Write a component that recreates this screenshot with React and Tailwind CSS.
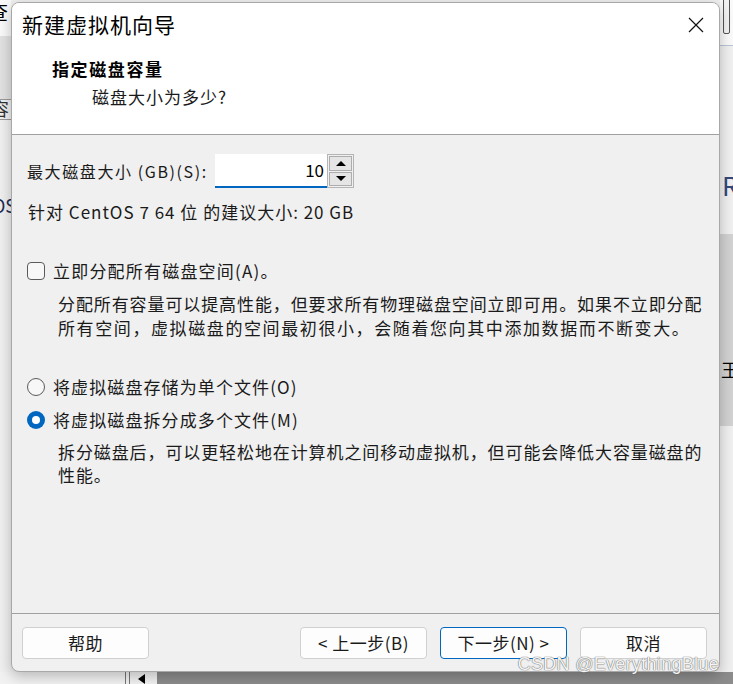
import React, { useState } from 'react';

const font = { fontFamily: '"Noto Sans CJK SC", "Liberation Sans", sans-serif' };

function Backdrop() {
    return (
        <div className="absolute inset-0 bg-[#f0f0f0]">
            {/* left strip */}
            <div className="absolute left-0 top-0 w-[11px] h-[36px] bg-[#fafafa] overflow-hidden">
                <span className="absolute left-[-12px] top-[2px] text-[20px] text-black leading-none" style={font}>查</span>
            </div>
            <div className="absolute left-0 top-[36px] w-[11px] h-[64px] bg-[#e2e2e2] border-b border-[#9a9a9a]" />
            <div className="absolute left-0 top-[100px] w-[11px] h-[20px] overflow-hidden border-b border-[#9a9a9a]">
                <span className="absolute left-[-9px] top-[-1px] text-[18px] text-[#333] leading-none" style={font}>容</span>
            </div>
            <div className="absolute left-0 top-[196px] w-[11px] h-[22px] overflow-hidden">
                <span className="absolute left-[-8px] top-0 text-[18px] text-[#1d2b55] leading-none" style={font}>OS</span>
            </div>
            {/* right strip */}
            <div className="absolute right-0 top-0 w-[13px] h-[46px] bg-[#fafafa] border-b border-[#b9c4d6]">
                <div className="absolute left-[3px] top-[-2px] w-[7px] h-[36px] border border-[#555] rounded-[2px] bg-[#f3f3f3]" />
            </div>
            <div className="absolute right-0 top-[172px] w-[13px] h-[30px] overflow-hidden">
                <span className="absolute left-[2px] top-0 text-[26px] text-[#34487a] leading-none" style={font}>R</span>
            </div>
            <div className="absolute right-0 top-[234px] w-[13px] h-[192px] bg-[#d2d2d2]">
                <span className="absolute left-[1px] top-[126px] text-[18px] text-black leading-none" style={font}>王</span>
            </div>
            {/* bottom strip */}
            <div className="absolute left-0 bottom-0 w-full h-[12px] flex">
                <div className="relative w-[157px] h-full bg-[#f2f2f2]">
                    <div className="absolute left-[125px] top-0 w-px h-full bg-[#777]" />
                    <div className="absolute left-[129px] top-0 w-px h-full bg-[#777]" />
                    <div className="absolute left-[138px] top-[2px] w-0 h-0 border-y-[5px] border-y-transparent border-r-[7px] border-r-black" />
                </div>
                <div className="flex-1 h-full bg-[#8c8c8c]" />
            </div>
        </div>
    );
}

function Radio({ checked }) {
    if (checked) {
        return (
            <span className="w-[18px] h-[18px] rounded-full bg-[#0067c0] flex items-center justify-center shrink-0">
                <span className="w-[8px] h-[8px] rounded-full bg-white" />
            </span>
        );
    }
    return <span className="w-[18px] h-[18px] rounded-full border border-[#5a5a5a] bg-[#f7f7f7] shrink-0" />;
}

function WizardButton({ children, primary }) {
    return (
        <button
            className={
                'w-[127px] h-[32px] rounded-[4px] bg-[#fdfdfd] text-[17px] tracking-[0.5px] text-[#1a1a1a] flex items-center justify-center ' +
                (primary ? 'border border-[#0067c0]' : 'border border-[#d0d0d0]')
            }
            style={font}
        >
            {children}
        </button>
    );
}

export default function App() {
    const [size, setSize] = useState(10);
    const [split, setSplit] = useState(true);
    const [allocate, setAllocate] = useState(false);

    return (
        <div className="relative w-[733px] h-[684px] overflow-hidden" style={font}>
            <Backdrop />

            {/* wizard window */}
            <div className="absolute left-[11px] top-[2px] w-[709px] h-[670px] flex flex-col rounded-[8px] border border-[#a8a8a8] overflow-hidden shadow-[0_4px_14px_rgba(0,0,0,0.25)] bg-[#f0f0f0]">
                {/* title bar */}
                <div className="h-[44px] bg-white flex items-center justify-between pl-[10px] pr-[15px] shrink-0">
                    <span className="text-[21px] tracking-[1px] text-black">新建虚拟机向导</span>
                    <svg width="16" height="16" viewBox="0 0 16 16">
                        <path d="M1 1 L15 15 M15 1 L1 15" stroke="#111" strokeWidth="1.2" />
                    </svg>
                </div>

                {/* header */}
                <div className="h-[87px] bg-white shrink-0 pt-[10px]">
                    <div className="pl-[40px] text-[17px] tracking-[1.6px] leading-[24px] font-bold text-black">指定磁盘容量</div>
                    <div className="pl-[80px] mt-[4px] text-[17px] tracking-[1px] leading-[24px] text-[#1a1a1a]">磁盘大小为多少?</div>
                </div>
                <div className="h-px bg-[#a0a0a0] shrink-0" />

                {/* content */}
                <div className="flex-1 pl-[15px] text-[#1a1a1a]">
                    <div className="mt-[19px] flex items-center h-[34px]">
                        <span className="w-[188px] text-[16px] tracking-[1.6px]">最大磁盘大小 (GB)(S):</span>
                        <div className="w-[112px] h-[34px] bg-white border-b-2 border-[#0067c0] flex items-center justify-end pr-[3px] text-[17px] text-black">
                            {size}
                        </div>
                        <div className="w-[27px] h-[34px] border border-[#b5b5b5] bg-[#f0f0f0] flex flex-col p-px gap-px">
                            <button onClick={() => setSize(size + 1)} className="flex-1 bg-[#e5e5e5] border border-[#adadad] flex items-center justify-center">
                                <span className="w-0 h-0 border-x-[5px] border-x-transparent border-b-[5px] border-b-black" />
                            </button>
                            <button onClick={() => setSize(Math.max(1, size - 1))} className="flex-1 bg-[#e5e5e5] border border-[#adadad] flex items-center justify-center">
                                <span className="w-0 h-0 border-x-[5px] border-x-transparent border-t-[5px] border-t-black" />
                            </button>
                        </div>
                    </div>

                    <div className="mt-[12px] leading-[24px] text-[17px] tracking-[1px] pl-px">针对 CentOS 7 64 位 的建议大小: 20 GB</div>

                    <div className="mt-[35px] h-[24px] flex items-center gap-[8px]" onClick={() => setAllocate(!allocate)}>
                        <span className="w-[18px] h-[18px] rounded-[4px] border border-[#5a5a5a] bg-[#f7f7f7] shrink-0" />
                        <span className="text-[17px] tracking-[1.2px]">立即分配所有磁盘空间(A)。</span>
                    </div>
                    <div className="mt-[9px] ml-[31px] text-[17px] leading-[24px] whitespace-nowrap">
                        <div className="tracking-[0.9px]">分配所有容量可以提高性能，但要求所有物理磁盘空间立即可用。如果不立即分配</div>
                        <div className="tracking-[1.6px]">所有空间，虚拟磁盘的空间最初很小，会随着您向其中添加数据而不断变大。</div>
                    </div>

                    <div className="mt-[35px] h-[24px] flex items-center gap-[8px]" onClick={() => setSplit(false)}>
                        <Radio checked={!split} />
                        <span className="text-[17px] tracking-[1.1px]">将虚拟磁盘存储为单个文件(O)</span>
                    </div>
                    <div className="mt-[9px] h-[24px] flex items-center gap-[8px]" onClick={() => setSplit(true)}>
                        <Radio checked={split} />
                        <span className="text-[17px] tracking-[1.1px]">将虚拟磁盘拆分成多个文件(M)</span>
                    </div>
                    <div className="mt-[8px] ml-[31px] text-[17px] tracking-[0.9px] leading-[23px] whitespace-nowrap">
                        <div>拆分磁盘后，可以更轻松地在计算机之间移动虚拟机，但可能会降低大容量磁盘的</div>
                        <div>性能。</div>
                    </div>
                </div>

                <div className="h-px bg-[#a0a0a0] shrink-0" />
                {/* footer */}
                <div className="h-[57px] shrink-0 flex items-start pt-[13px] pl-[10px] pr-[12px]">
                    <WizardButton>帮助</WizardButton>
                    <div className="flex-1" />
                    <div className="flex gap-[13px]">
                        <WizardButton>&lt;&nbsp;上一步(B)</WizardButton>
                        <WizardButton primary>下一步(N)&nbsp;&gt;</WizardButton>
                        <WizardButton>取消</WizardButton>
                    </div>
                </div>
            </div>

            {/* watermark */}
            <div className="absolute right-[14px] top-[652px] text-[18px] tracking-[0.3px] leading-[24px] text-[#f4f4f4] [text-shadow:0_0_1px_#666,0_0_1px_#666]" style={{ fontFamily: '"Liberation Sans", sans-serif' }}>
                CSDN @EverythingBlue
            </div>
        </div>
    );
}
